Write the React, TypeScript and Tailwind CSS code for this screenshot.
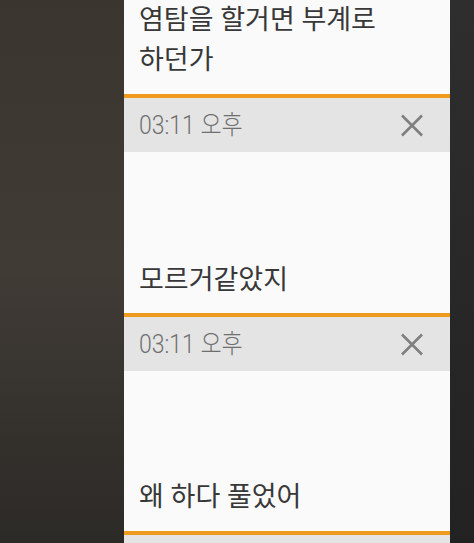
interface Note {
  id: number;
  lines: string[];
  time: string;
}

const notes: Note[] = [
  { id: 1, lines: ['염탐을 할거면 부계로', '하던가'], time: '03:11 오후' },
  { id: 2, lines: ['모르거같았지'], time: '03:11 오후' },
  { id: 3, lines: ['왜 하다 풀었어'], time: '' },
];

const font = { fontFamily: '"Roboto", "Noto Sans CJK KR", sans-serif' };

function CloseIcon() {
  return (
    <svg width="24" height="23" viewBox="0 0 24 23" className="text-[#7f7f7f]">
      <path d="M2 1.5 22 21.5M22 1.5 2 21.5" stroke="currentColor" strokeWidth="2.6" fill="none" />
    </svg>
  );
}

function NoteHeader({ time }: { time: string }) {
  return (
    <div className="flex h-[54px] shrink-0 items-center justify-between bg-[#e4e4e4] pl-[15px] pr-[26px]">
      <span className="inline-block origin-left scale-y-[1.12] text-[23px] font-light leading-none text-[#6f6f6f]">
        {time}
      </span>
      <CloseIcon />
    </div>
  );
}

export default function App() {
  return (
    <div className="flex h-[543px] w-full overflow-hidden" style={font}>
      {/* dimmed wallpaper on the left */}
      <div className="w-[124px] shrink-0 bg-gradient-to-b from-[#3b3530] via-[#403b35] to-[#2c2a27]" />

      {/* notification column */}
      <div className="flex w-[326px] shrink-0 flex-col bg-[#fafafa]">
        {/* first card, scrolled so only its body shows */}
        <div className="px-[15px] pb-[14px] text-[27px] leading-[40px] text-[#383838]">
          {notes[0].lines.map((l) => (
            <div key={l}>{l}</div>
          ))}
        </div>
        <div className="h-[4px] shrink-0 bg-[#ef9a1f]" />
        <NoteHeader time={notes[0].time} />

        <div className="flex h-[161px] shrink-0 items-end px-[15px] pb-[13px] text-[27px] leading-[40px] text-[#383838]">
          {notes[1].lines[0]}
        </div>
        <div className="h-[4px] shrink-0 bg-[#ef9a1f]" />
        <NoteHeader time={notes[1].time} />

        <div className="flex h-[160px] shrink-0 items-end px-[15px] pb-[14px] text-[27px] leading-[40px] text-[#383838]">
          {notes[2].lines[0]}
        </div>
        <div className="h-[4px] shrink-0 bg-[#ef9a1f]" />
        <div className="flex-1 bg-[#e4e4e4]" />
      </div>

      {/* right edge */}
      <div className="flex-1 bg-gradient-to-b from-[#2e2e2e] to-[#222222]" />
    </div>
  );
}
